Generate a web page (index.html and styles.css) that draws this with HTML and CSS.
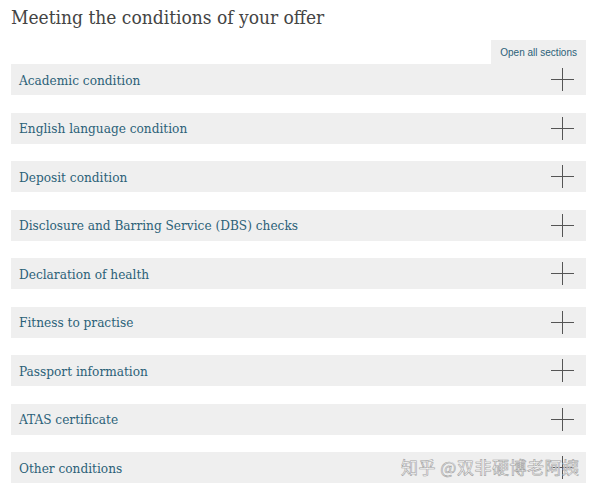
FILE: index.html
```html
<!DOCTYPE html>
<html lang="en">
<head>
<meta charset="UTF-8">
<meta name="viewport" content="width=device-width, initial-scale=1">
<title>Offer conditions</title>
<link rel="stylesheet" href="styles.css">
</head>
<body>

    <div class="content">

        <h1 class="page-title">Meeting the conditions of your offer</h1>

        <div class="accordion">

            <div class="accordion__toolbar">
                <button class="accordion__open-all">Open all sections</button>
            </div>

            <div class="accordion__item"><span class="accordion__title">Academic condition</span><span class="plus"></span></div>
            <div class="accordion__item"><span class="accordion__title">English language condition</span><span class="plus"></span></div>
            <div class="accordion__item"><span class="accordion__title">Deposit condition</span><span class="plus"></span></div>
            <div class="accordion__item"><span class="accordion__title">Disclosure and Barring Service (DBS) checks</span><span class="plus"></span></div>
            <div class="accordion__item"><span class="accordion__title">Declaration of health</span><span class="plus"></span></div>
            <div class="accordion__item"><span class="accordion__title">Fitness to practise</span><span class="plus"></span></div>
            <div class="accordion__item"><span class="accordion__title">Passport information</span><span class="plus"></span></div>
            <div class="accordion__item"><span class="accordion__title">ATAS certificate</span><span class="plus"></span></div>
            <div class="accordion__item"><span class="accordion__title">Other conditions</span><span class="plus"></span></div>

        </div>

    </div>

    <!-- zhihu share watermark -->
    <div class="watermark">知乎 @双非硬博老阿姨</div>

</body>
</html>
```

FILE: styles.css
```css
:root
{
    --title-colour: #444444;
    --link-colour: #2b6178;
    --row-background: #efefef;
    --icon-colour: #555555;
}

body
{
    margin: 0;
    background-color: #ffffff;
    font-family: "DejaVu Serif Condensed", "DejaVu Serif", Georgia, serif;
}

.content
{
    width: 575px;
    margin-left: 11px;
    padding-top: 5px;
}

.page-title
{
    margin: 0;
    font-weight: normal;
    font-size: 19px;
    line-height: 24px;
    color: var(--title-colour);
}

.accordion__toolbar
{
    display: flex;
    justify-content: flex-end;
    margin-top: 11px;
}

.accordion__open-all
{
    font-family: "Liberation Sans", Arial, sans-serif;
    font-size: 10px;
    color: var(--link-colour);
    background-color: var(--row-background);
    border: none;
    height: 24px;
    padding: 0 9px;
    margin: 0;
}

.accordion__item
{
    display: flex;
    align-items: center;
    justify-content: space-between;
    height: 31px;
    padding: 0 12px 0 8px;
    background-color: var(--row-background);
    margin-bottom: 17.5px;
}

.accordion__title
{
    font-size: 13.5px;
    color: var(--link-colour);
}

/* thin plus sign drawn with two bars */
.plus
{
    position: relative;
    width: 23px;
    height: 23px;
}

.plus::before,
.plus::after
{
    content: "";
    position: absolute;
    background-color: var(--icon-colour);
}

.plus::before
{
    left: 0;
    right: 0;
    top: 11px;
    height: 1.3px;
}

.plus::after
{
    top: 0;
    bottom: 0;
    left: 11px;
    width: 1.3px;
}

.watermark
{
    position: absolute;
    left: 401px;
    top: 454px;
    font-family: "Noto Sans CJK SC", sans-serif;
    font-size: 17px;
    color: #ffffff;
    -webkit-text-stroke: 0.6px #a0a0a0;
    letter-spacing: 0.5px;
}
```
